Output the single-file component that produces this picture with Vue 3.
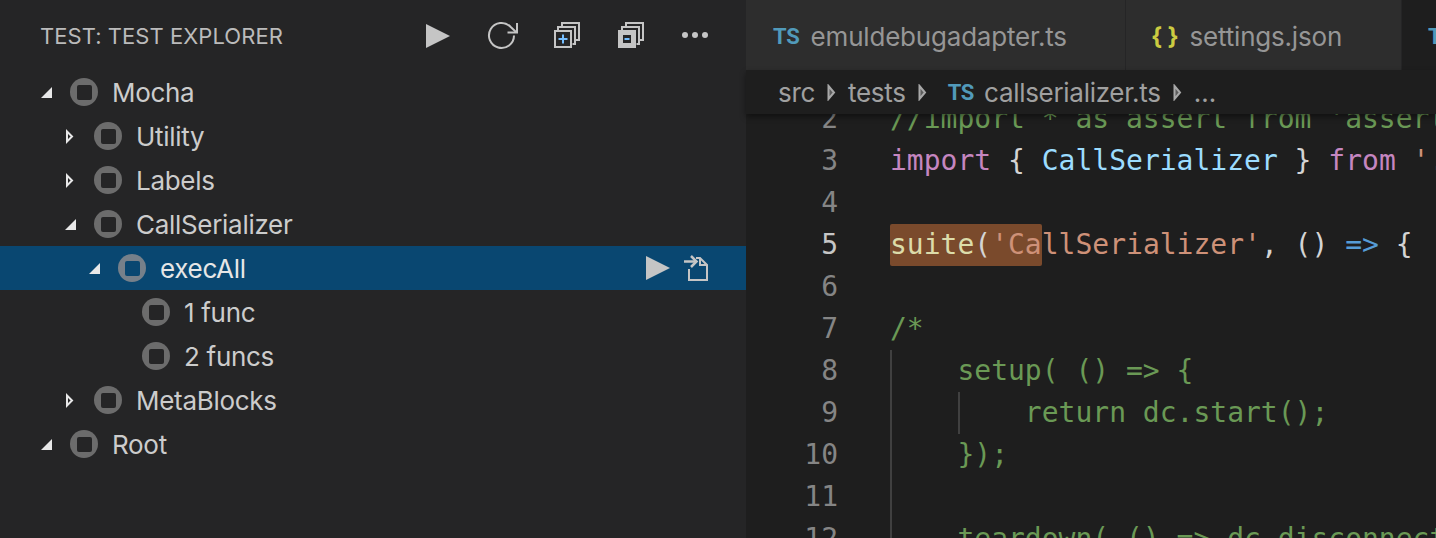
<script setup>
const rows = [
  { label: 'Mocha', depth: 0, twist: 'open' },
  { label: 'Utility', depth: 1, twist: 'closed' },
  { label: 'Labels', depth: 1, twist: 'closed' },
  { label: 'CallSerializer', depth: 1, twist: 'open' },
  { label: 'execAll', depth: 2, twist: 'open', selected: true },
  { label: '1 func', depth: 3, twist: 'none' },
  { label: '2 funcs', depth: 3, twist: 'none' },
  { label: 'MetaBlocks', depth: 1, twist: 'closed' },
  { label: 'Root', depth: 0, twist: 'open' },
]

const lines = [
  { n: 2, t: [['cm', "//import * as assert from 'assert';"]] },
  { n: 3, t: [['kw', 'import'], ['pl', ' { '], ['va', 'CallSerializer'], ['pl', ' } '], ['kw', 'from'], ['st', " './callSerializer';"]] },
  { n: 4, t: [] },
  { n: 5, active: true, t: [['hl', [['fn', 'suite'], ['pl', '('], ['st', "'Ca"]]], ['st', "llSerializer'"], ['pl', ', () '], ['ar', '=>'], ['pl', ' {']] },
  { n: 6, t: [] },
  { n: 7, t: [['cm', '/*']] },
  { n: 8, t: [['cm', '    setup( () => {']] },
  { n: 9, t: [['cm', '        return dc.start();']] },
  { n: 10, t: [['cm', '    });']] },
  { n: 11, t: [] },
  { n: 12, t: [['cm', '    teardown( () => dc.disconnect() );']] },
]
</script>

<template>
  <div class="window">
    <aside class="sidebar">
      <header class="side-head">
        <h2 class="side-title">TEST: TEST EXPLORER</h2>
        <div class="actions">
          <span class="action">
            <svg width="26" height="28" viewBox="0 0 26 28"><polygon points="0,3 24,15 0,27" fill="#c5c5c5" /></svg>
          </span>
          <span class="action">
            <svg width="34" height="32" viewBox="0 0 34 32" fill="none" stroke="#c5c5c5" stroke-width="2">
              <path d="M28 16.5A12.5 12.5 0 1 1 24.5 7.8L30 13" />
              <path d="M31 4V13.5H21.5" />
            </svg>
          </span>
          <span class="action">
            <svg width="26" height="26" viewBox="0 0 26 26" fill="none" stroke="#c5c5c5" stroke-width="2">
              <path d="M4 8V5H21V22H18.5" />
              <path d="M8 4V1H25V18H22" />
              <rect x="1" y="9" width="16" height="16" fill="#252526" />
              <path d="M4.5 17H13.5M9 12.5V21.5" stroke="#75beff" />
            </svg>
          </span>
          <span class="action">
            <svg width="26" height="26" viewBox="0 0 26 26" fill="none" stroke="#c5c5c5" stroke-width="2">
              <path d="M4 8V5H21V22H18.5" />
              <path d="M8 4V1H25V18H22" />
              <rect x="2.5" y="10.5" width="13" height="13" fill="#252526" stroke-width="5" />
              <path d="M6.5 17H11.5" stroke="#75beff" />
            </svg>
          </span>
          <span class="action">
            <svg width="26" height="6" viewBox="0 0 26 6"><g fill="#c5c5c5"><circle cx="3" cy="3" r="3" /><circle cx="13" cy="3" r="3" /><circle cx="23" cy="3" r="3" /></g></svg>
          </span>
        </div>
      </header>

      <ul class="tree">
        <li
          v-for="row in rows"
          :key="row.label"
          class="row"
          :class="{ selected: row.selected }"
          :style="{ paddingLeft: 40 + row.depth * 24 + 'px' }"
        >
          <span class="twist">
            <svg v-if="row.twist === 'open'" width="16" height="16" viewBox="0 0 16 16"><polygon points="12,3 12,14 1,14" fill="#e8e8e8" /></svg>
            <svg v-else-if="row.twist === 'closed'" width="16" height="16" viewBox="0 0 16 16"><polygon points="3,3.5 8,8.5 3,13.5" fill="none" stroke="#e8e8e8" stroke-width="2" /></svg>
          </span>
          <span class="state"><span class="state-box"></span></span>
          <span class="label">{{ row.label }}</span>
          <span v-if="row.selected" class="row-actions">
            <svg width="24" height="24" viewBox="0 0 24 24"><polygon points="0,0 24,12 0,24" fill="#c5c5c5" /></svg>
            <svg width="26" height="28" viewBox="0 0 26 28" fill="none" stroke="#c5c5c5" stroke-width="2">
              <path d="M6 15V26H24V11L17 4H13" />
              <path d="M17 4V11H24" />
              <path d="M1 7.5H13" stroke-width="2.5" />
              <path d="M8 2L13.5 7.5L8 13" stroke-width="2.5" />
            </svg>
          </span>
        </li>
      </ul>
    </aside>

    <main class="editor">
      <nav class="tabs">
        <div class="tab tab-one"><span class="ts">TS</span><span>emuldebugadapter.ts</span></div>
        <div class="tab tab-two"><span class="braces">{ }</span><span>settings.json</span></div>
        <div class="tab tab-active"><span class="ts">TS</span></div>
      </nav>
      <div class="crumbs">
        <span>src</span>
        <svg class="caret" width="9" height="17" viewBox="0 0 9 17"><polygon points="1.5,2 7,8.5 1.5,15" fill="#5c5c5c" stroke="#a8a8a8" stroke-width="2" /></svg>
        <span>tests</span>
        <svg class="caret" width="9" height="17" viewBox="0 0 9 17"><polygon points="1.5,2 7,8.5 1.5,15" fill="#5c5c5c" stroke="#a8a8a8" stroke-width="2" /></svg>
        <span class="ts crumb-ts">TS</span><span>callserializer.ts</span>
        <svg class="caret" width="9" height="17" viewBox="0 0 9 17"><polygon points="1.5,2 7,8.5 1.5,15" fill="#5c5c5c" stroke="#a8a8a8" stroke-width="2" /></svg>
        <span>…</span>
      </div>
      <div class="code-wrap">
        <div class="code">
          <span class="guide guide-outer"></span>
          <span class="guide guide-inner"></span>
          <div v-for="line in lines" :key="line.n" class="line">
            <span class="num" :class="{ active: line.active }">{{ line.n }}</span>
            <span class="src"><template v-for="(tok, i) in line.t" :key="i"><span v-if="tok[0] === 'hl'" class="hl"><span v-for="(s, j) in tok[1]" :key="j" :class="s[0]">{{ s[1] }}</span></span><span v-else :class="tok[0]">{{ tok[1] }}</span></template></span>
          </div>
        </div>
      </div>
    </main>
  </div>
</template>

<style>
html, body { margin: 0; background: #1e1e1e; }
</style>

<style scoped>
.window {
  display: flex;
  width: 1436px;
  height: 538px;
  overflow: hidden;
  font-family: Inter, Roboto, "Liberation Sans", sans-serif;
  font-size: 26px;
  letter-spacing: -0.3px;
  color: #cccccc;
}
.sidebar {
  width: 746px;
  flex: none;
  background: #252526;
}
.side-head {
  display: flex;
  align-items: center;
  height: 70px;
  padding: 0 19px 0 40px;
}
.side-title {
  margin: 2px 0 0;
  font-size: 22px;
  font-weight: 400;
  color: #bbbbbb;
  letter-spacing: 0.05px;
}
.actions { display: flex; margin-left: auto; }
.action {
  display: flex;
  align-items: center;
  justify-content: center;
  width: 64px;
  height: 70px;
}
.tree { list-style: none; margin: 0; padding: 0; }
.row {
  display: flex;
  align-items: center;
  height: 44px;
  padding-right: 37px;
}
.row.selected { background: #094771; color: #e6e6e6; }
.twist { display: flex; width: 30px; flex: none; }
.state {
  display: flex;
  align-items: center;
  justify-content: center;
  width: 28px;
  height: 28px;
  flex: none;
  border-radius: 50%;
  background: #6c6c6c;
}
.state-box {
  width: 15px;
  height: 15px;
  border-radius: 2px;
  background: #252526;
}
.selected .state { background: #76808a; }
.selected .state-box { background: #094771; }
.label { margin-left: 14px; }
.row-actions {
  display: flex;
  align-items: center;
  gap: 13px;
  margin-left: auto;
}
.editor {
  flex: 1;
  min-width: 0;
  display: flex;
  flex-direction: column;
  background: #1e1e1e;
}
.tabs {
  display: flex;
  flex: none;
  height: 70px;
  background: #252526;
}
.tab {
  display: flex;
  align-items: center;
  box-sizing: border-box;
  flex: none;
  padding-top: 2px;
  background: #2d2d2d;
  color: #969696;
  border-right: 1px solid #252526;
  white-space: nowrap;
  letter-spacing: -0.2px;
}
.tab-one { width: 380px; padding-left: 27px; }
.tab-two { width: 276px; padding-left: 25px; }
.tab-active { flex: 1; min-width: 0; padding-left: 26px; background: #1e1e1e; border: 0; overflow: hidden; }
.ts {
  font-family: Roboto, sans-serif;
  font-size: 22px;
  font-weight: 700;
  color: #519aba;
  margin-right: 11px;
}
.braces {
  font-size: 24px;
  font-weight: 700;
  color: #cbcb41;
  margin-right: 11px;
  white-space: pre;
}
.crumbs {
  position: relative;
  z-index: 2;
  flex: none;
  display: flex;
  align-items: center;
  height: 44px;
  padding: 1px 0 0 32px;
  box-sizing: border-box;
  background: #1e1e1e;
  color: #a0a0a0;
  box-shadow: 0 3px 6px rgba(0, 0, 0, 0.45);
}
.caret { margin: 0 12px; flex: none; }
.crumb-ts { margin-left: 9px; margin-right: 10px; }
.code-wrap {
  flex: 1;
  min-height: 0;
  overflow: hidden;
}
.code {
  position: relative;
  margin-top: -16px;
  font-family: "DejaVu Sans Mono", "Liberation Mono", monospace;
  font-size: 28px;
  letter-spacing: 0;
}
.line {
  display: flex;
  height: 42px;
  line-height: 42px;
  white-space: pre;
}
.num {
  flex: none;
  width: 92px;
  text-align: right;
  color: #858585;
}
.num.active { color: #c6c6c6; }
.src { margin-left: 52px; color: #d4d4d4; }
.hl {
  display: inline-block;
  height: 42px;
  background: #7a4a2c;
  border-radius: 2px;
}
.cm { color: #6a9955; }
.kw { color: #c586c0; }
.va { color: #9cdcfe; }
.st { color: #ce9178; }
.fn { color: #dcdcaa; }
.pl { color: #d4d4d4; }
.ar { color: #569cd6; }
.guide {
  position: absolute;
  width: 2px;
  background: #404040;
}
.guide-outer { left: 144px; top: 252px; bottom: 0; }
.guide-inner { left: 212px; top: 294px; height: 42px; }
</style>
